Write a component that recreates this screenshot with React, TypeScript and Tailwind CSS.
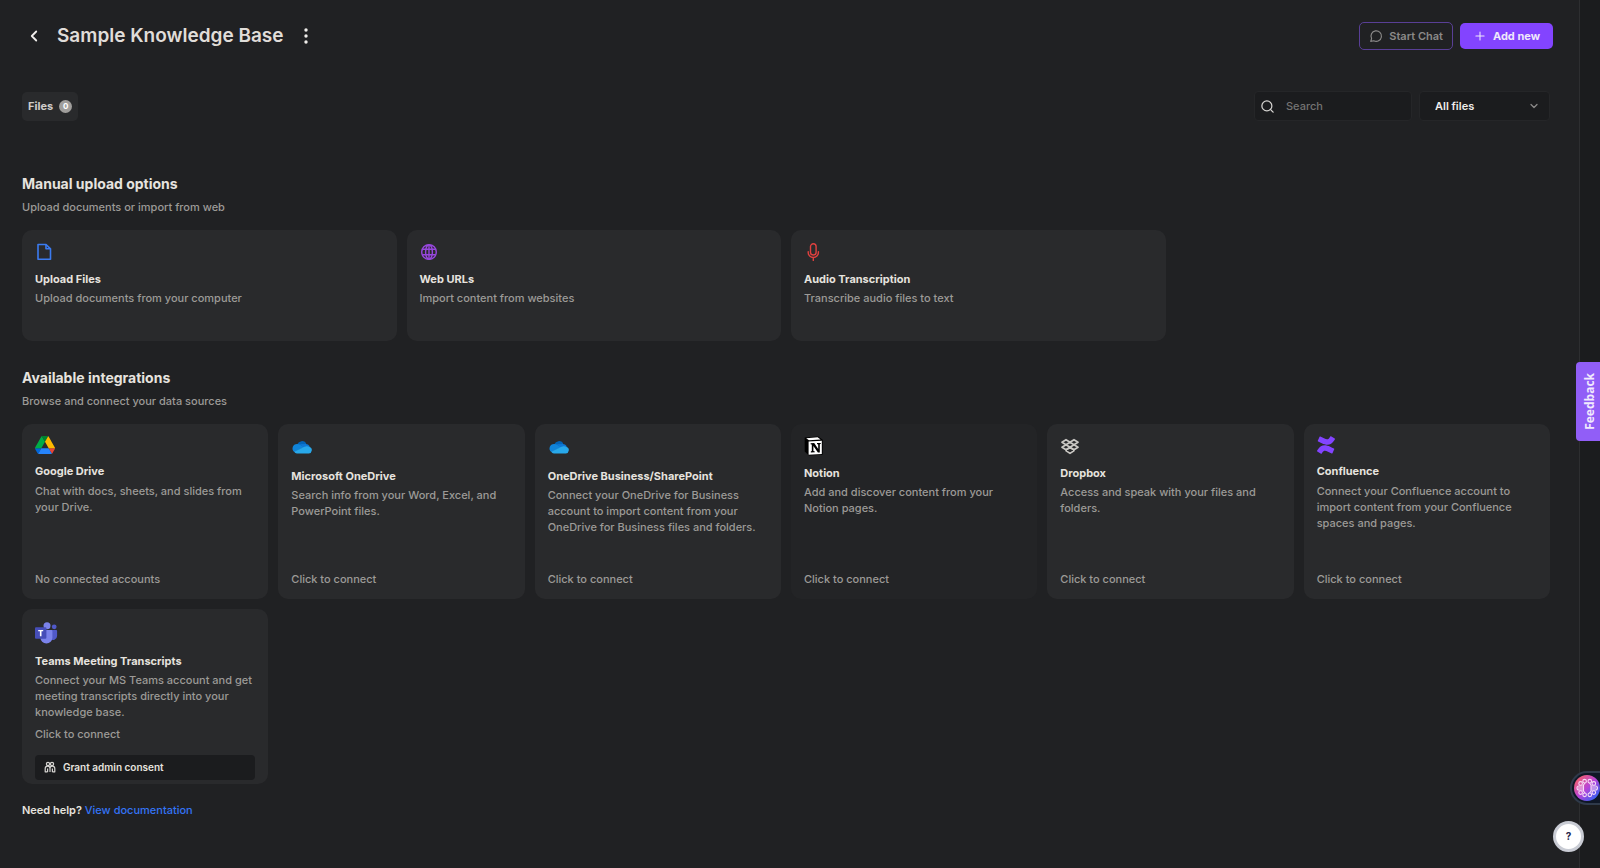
import type { ReactNode } from "react";
import { ChevronDown, ChevronLeft, Plus, Search } from "lucide-react";
import { SiConfluence } from "react-icons/si";

function ChatIcon() {
  return (
    <svg viewBox="0 0 24 24" className="size-[14px]" fill="none" stroke="currentColor" strokeWidth="2" strokeLinecap="round" strokeLinejoin="round">
      <path d="M3 21.200l1.400-4.800A9 9 0 1 1 8.200 20.200z" />
    </svg>
  );
}

function FileIcon() {
  return (
    <svg viewBox="-1 0 18 18" className="size-[18px]" fill="none" stroke="#3b7bf0" strokeWidth="1.6" strokeLinejoin="round">
      <path d="M2 1.500h8l4.500 4.300v10.500H2z" />
      <path d="M10 1.500V5.800h4.500" />
    </svg>
  );
}

function GlobeIcon() {
  return (
    <svg viewBox="0 0 18 18" className="size-[18px]" fill="none" stroke="#9747dd" strokeWidth="1.4">
      <circle cx="9" cy="9" r="7.3" />
      <ellipse cx="9" cy="9" rx="3.4" ry="7.3" />
      <path d="M9 1.7v14.6M2.4 6.2h13.2M2.4 11.8h13.2" />
    </svg>
  );
}

function MicIcon() {
  return (
    <svg viewBox="0 0 18 18" className="size-[18px]" fill="none" stroke="#e0413f" strokeWidth="1.4" strokeLinecap="round">
      <rect x="6.500" y="0.8" width="5.600" height="11.2" rx="2.8" />
      <path d="M4.200 8.6v.8a5.100 5.100 0 0 0 10.200 0v-.8M9.300 14.5v3" />
    </svg>
  );
}

function DriveIcon() {
  return (
    <svg viewBox="0 0 87.3 78" className="h-[18px] w-5">
      <path d="m6.6 66.85 3.85 6.65c.8 1.4 1.95 2.5 3.3 3.3l13.75-23.8h-27.5c0 1.55.4 3.1 1.2 4.5z" fill="#0066da" />
      <path d="m43.65 25-13.75-23.8c-1.35.8-2.5 1.9-3.3 3.3l-25.4 44a9.06 9.06 0 0 0-1.2 4.5h27.5z" fill="#00ac47" />
      <path d="m73.55 76.8c1.35-.8 2.5-1.9 3.3-3.3l1.6-2.75 7.65-13.25c.8-1.4 1.2-2.95 1.2-4.5h-27.5l5.85 11.5z" fill="#ea4335" />
      <path d="m43.65 25 13.75-23.8c-1.35-.8-2.9-1.2-4.5-1.2h-18.5c-1.6 0-3.15.45-4.5 1.2z" fill="#00832d" />
      <path d="m59.8 53h-32.3l-13.75 23.8c1.35.8 2.9 1.2 4.5 1.2h50.8c1.6 0 3.15-.45 4.5-1.2z" fill="#2684fc" />
      <path d="m73.4 26.5-12.7-22c-.8-1.4-1.95-2.5-3.3-3.3l-13.75 23.8 16.15 28h27.45c0-1.55-.4-3.1-1.2-4.5z" fill="#ffba00" />
    </svg>
  );
}

function OneDriveIcon() {
  return (
    <svg viewBox="0.4 1.2 26 26" className="size-6">
      <path d="M7.2 10.2A5.6 5.6 0 0 1 16.9 9l-2.4 5.2-7.3-1.6z" fill="#0364b8" />
      <path d="M16.3 10a4.9 4.9 0 0 1 4.6 3.3l-4 2.5-7-5.6z" fill="#0f78d4" />
      <path d="M6.900 9.800a4.900 4.900 0 0 1 2.900.7l4.600 2.800L4 18.600a4.900 4.900 0 0 1 2.900-8.800z" fill="#1084d9" />
      <path d="M3.8 18.2l10.5-5 2-.5c1-.5 2.5-.5 4.2.4a3.6 3.6 0 0 1-.8 7H6.8a4.8 4.8 0 0 1-3-1.9z" fill="#28a8ea" />
    </svg>
  );
}

function NotionIcon() {
  return (
    <svg viewBox="0 0 20 20" className="size-5">
      <path d="M.7 1.6 14.2.5l4.5 3.300v15L5 19.6.7 15.4z" fill="#000" />
      <path d="M2.2 2.2 13.6 1.3l3 2.1L5 4.2z" fill="#fff" />
      <path d="M4.6 5.4 17.8 4.7v13.2L4.6 18.7z" fill="#fff" />
      <path d="M6.600 7.300l3.600-.2 4 5.900V8.400l-1.200-.3v-1l3.800-.2v.9l-1 .5v8.100l-1.900.1-4.500-6.500v5.100l1.400.3v.9l-4 .2v-.9l1-.5V8.500l-1.200-.2z" fill="#000" />
    </svg>
  );
}

function DropboxIcon() {
  return (
    <svg viewBox="0 -2 20 20" className="size-5" fill="none" stroke="#c9c7c3" strokeWidth="1.7" strokeLinejoin="round">
      <path d="M6 1.700 10 4.200 6 6.700 2 4.200zM14 1.700l4 2.500-4 2.500-4-2.500zM6 6.700l4 2.500-4 2.500-4-2.500zM14 6.700l4 2.500-4 2.500-4-2.500z" />
      <path d="M6.200 11.900v1L10 15.400l3.800-2.500v-1L10 9.500z" />
    </svg>
  );
}

function TeamsIcon() {
  return (
    <svg viewBox="1 0 24 24" className="size-6">
      <circle cx="20.2" cy="5.8" r="2.4" fill="#5059c9" />
      <path d="M16 9h6.2a.9.9 0 0 1 .9.9v5.2a4 4 0 0 1-7 2.6z" fill="#5059c9" />
      <circle cx="13" cy="4.7" r="3.5" fill="#7b83eb" />
      <path d="M7.2 9h10.2a1 1 0 0 1 1 1v6.4a6 6 0 0 1-12 0V10z" fill="#7b83eb" />
      <rect x="1" y="6.3" width="11.4" height="11.4" rx="1" fill="#464eb8" />
      <path d="M4.2 8.9h5v1.4H7.5v5H5.9v-5H4.2z" fill="#fff" />
    </svg>
  );
}

function AdminsIcon() {
  return (
    <svg viewBox="0 0 12 12" className="size-3" fill="none" stroke="#d6d4d1" strokeWidth="1.2">
      <circle cx="4" cy="3" r="1.600" />
      <circle cx="8" cy="3" r="1.600" />
      <path d="M1.200 11V7.600C1.200 6 2.300 5.200 3.800 5.200S6 6 6 7.600V11M6 7.600C6 6 6.700 5.200 8.200 5.200s2.600.8 2.600 2.400V11M3.600 7.600V11M8.400 7.600V11M.8 10.800h2.800M8.400 10.800h2.800" />
    </svg>
  );
}

function AssistantIcon() {
  return (
    <svg viewBox="0 0 26 26" className="size-[26px] shrink-0">
      <defs>
        <linearGradient id="assistant" x1="0" y1="0" x2="1" y2="1">
          <stop offset="0.1" stopColor="#f4606c" />
          <stop offset="0.5" stopColor="#b844d8" />
          <stop offset="0.9" stopColor="#2f63f5" />
        </linearGradient>
      </defs>
      <circle cx="13" cy="13" r="13" fill="url(#assistant)" />
      <g fill="none" stroke="#f6dcf6" strokeWidth="1.1">
        <circle cx="10.600" cy="6.200" r="1.800" />
        <circle cx="15.800" cy="6.200" r="1.800" />
        <circle cx="6.600" cy="8.400" r="1.800" />
        <circle cx="19.800" cy="8.400" r="1.800" />
        <circle cx="6.600" cy="17.600" r="1.800" />
        <circle cx="19.800" cy="17.600" r="1.800" />
        <circle cx="10.600" cy="19.800" r="1.800" />
        <circle cx="15.800" cy="19.800" r="1.800" />
        <path d="M9.500 11H5a2 2 0 0 0 0 4h4.500M17 11h4.500a2 2 0 0 1 0 4H17M4 13h5.500M17 13h5.500M11 8l-1.500 2v6l1.500 2M15.500 8l1.500 2v6l-1.500 2" />
      </g>
    </svg>
  );
}

type Integration = {
  name: string;
  text: string;
  status: string;
  icon: ReactNode;
  iconBox: string;
  textGap: string;
  card: string;
  action?: string;
};

const plainCard = "bg-[#292a2c]";

const integrations: Integration[] = [
  { name: "Google Drive", text: "Chat with docs, sheets, and slides from your Drive.", status: "No connected accounts", icon: <DriveIcon />, iconBox: "h-[19px]", textGap: "mt-1", card: plainCard },
  { name: "Microsoft OneDrive", text: "Search info from your Word, Excel, and PowerPoint files.", status: "Click to connect", icon: <OneDriveIcon />, iconBox: "h-6", textGap: "mt-[3px]", card: plainCard },
  { name: "OneDrive Business/SharePoint", text: "Connect your OneDrive for Business account to import content from your OneDrive for Business files and folders.", status: "Click to connect", icon: <OneDriveIcon />, iconBox: "h-6", textGap: "mt-[3px]", card: plainCard },
  { name: "Notion", text: "Add and discover content from your Notion pages.", status: "Click to connect", icon: <NotionIcon />, iconBox: "h-[21px]", textGap: "mt-[3px]", card: "bg-[#232426]" },
  { name: "Dropbox", text: "Access and speak with your files and folders.", status: "Click to connect", icon: <DropboxIcon />, iconBox: "h-[21px]", textGap: "mt-[3px]", card: plainCard },
  { name: "Confluence", text: "Connect your Confluence account to import content from your Confluence spaces and pages.", status: "Click to connect", icon: <SiConfluence className="size-[18px] text-[#8344ff]" />, iconBox: "h-[19px]", textGap: "mt-1", card: plainCard },
  { name: "Teams Meeting Transcripts", text: "Connect your MS Teams account and get meeting transcripts directly into your knowledge base.", status: "Click to connect", icon: <TeamsIcon />, iconBox: "h-6", textGap: "mt-[3px]", card: plainCard, action: "Grant admin consent" },
];

const uploads = [
  { name: "Upload Files", text: "Upload documents from your computer", icon: <FileIcon /> },
  { name: "Web URLs", text: "Import content from websites", icon: <GlobeIcon /> },
  { name: "Audio Transcription", text: "Transcribe audio files to text", icon: <MicIcon /> },
];

function SectionHeading({ title, text }: { title: string; text: string }) {
  return (
    <div>
      <h2 className="text-[14px] leading-5 font-bold text-[#e6e3df]">{title}</h2>
      <p className="mt-[3px] text-[11px] leading-5 font-medium text-[#9c9a97]">{text}</p>
    </div>
  );
}

function IntegrationCard({ item }: { item: Integration }) {
  return (
    <li className={`flex h-[175px] flex-col overflow-hidden rounded-[10px] px-[13px] pt-3 ${item.card}`}>
      <div className={`flex items-start ${item.iconBox}`}>{item.icon}</div>
      <h3 className="mt-2 text-[11px] leading-4 font-bold text-[#e6e3df]">{item.name}</h3>
      <p className={`text-[11px] leading-4 font-medium text-[#9c9a97] ${item.textGap}`}>{item.text}</p>
      {item.action ? (
        <>
          <p className="mt-[6px] text-[11px] leading-4 font-medium text-[#9c9a97]">{item.status}</p>
          <button type="button" className="mt-[13px] flex h-[25px] shrink-0 items-center gap-[7px] rounded bg-[#1b1c1e] px-[9px] pb-[2px] text-[10px] leading-4 font-semibold text-[#e6e3df]">
            <AdminsIcon />
            {item.action}
          </button>
        </>
      ) : (
        <p className="mt-auto mb-3 text-[11px] leading-4 font-medium text-[#9c9a97]">{item.status}</p>
      )}
    </li>
  );
}

export default function App() {
  return (
    <div className="flex min-h-screen bg-[#1b1c1e] font-['Inter',sans-serif]">
      <main className="min-w-0 flex-1 border-r border-[#2d2e30] bg-[#202123] pr-[29px] pl-[22px]">
        <header className="flex items-center justify-between pt-[22px]">
          <div className="flex items-center">
            <button type="button" aria-label="Back" className="ml-[3px] text-[#f0eeeb]">
              <ChevronLeft className="size-[18px]" strokeWidth={2.4} />
            </button>
            <h1 className="ml-[14px] text-[19px] leading-[26px] font-semibold text-[#e0ddd9]">Sample Knowledge Base</h1>
            <button type="button" aria-label="More options" className="ml-4 p-1">
              <svg viewBox="0 0 4 16" className="h-4 w-1" fill="#f0eeeb">
                <circle cx="2" cy="2" r="1.7" />
                <circle cx="2" cy="8" r="1.7" />
                <circle cx="2" cy="14" r="1.7" />
              </svg>
            </button>
          </div>
          <div className="-mr-[3px] flex items-center gap-[7px]">
            <button type="button" className="flex h-7 items-center gap-[6px] rounded-[5px] border border-[#593f96] px-[9px] text-[11px] font-semibold text-[#8b8a89]">
              <ChatIcon />
              Start Chat
            </button>
            <button type="button" className="flex h-[26px] items-center gap-[6px] rounded-[5px] bg-[#8344ff] px-[13px] text-[11px] font-bold text-[#efe8fb]">
              <Plus className="size-[14px]" strokeWidth={1.8} />
              Add new
            </button>
          </div>
        </header>

        <div className="mt-[41px] flex items-center justify-between">
          <button type="button" className="flex h-[29px] items-center gap-[6px] rounded-[5px] bg-[#292a2c] px-[6px] text-[11px] font-bold text-[#cfccc9]">
            Files
            <span className="flex size-[13px] items-center justify-center rounded-full bg-[#a09e9c] text-[8px] leading-none font-bold text-white">0</span>
          </button>
          <div className="flex gap-[7px]">
            <label className="flex h-[30px] w-[158px] items-center gap-[11px] rounded-[4px] border border-[#252628] bg-[#1b1c1e] px-[5px]">
              <Search className="size-[15px] shrink-0 text-[#d6d4d1]" strokeWidth={2} />
              <input type="search" aria-label="Search files" placeholder="Search" className="h-7 w-full min-w-0 bg-transparent text-[11px] font-medium text-[#e6e3df] outline-none placeholder:text-[#747372]" />
            </label>
            <label className="flex h-[30px] w-[131px] items-center rounded-[4px] border border-[#252628] bg-[#1b1c1e] pr-[9px] pl-[15px]">
              <select aria-label="File type" className="h-7 w-full min-w-0 appearance-none bg-transparent text-[11px] font-semibold text-[#f0eeeb] outline-none">
                <option>All files</option>
              </select>
              <ChevronDown className="size-3 shrink-0 text-[#8b8a89]" strokeWidth={2.5} />
            </label>
          </div>
        </div>

        <section className="mt-[53px]">
          <SectionHeading title="Manual upload options" text="Upload documents or import from web" />
          <ul className="mt-[13px] grid grid-cols-4 gap-[10px]">
            {uploads.map((item) => (
              <li key={item.name} className="h-[111px] rounded-[10px] bg-[#292a2c] p-[13px]">
                <div className="flex h-5 items-start">{item.icon}</div>
                <h3 className="mt-2 text-[11px] leading-4 font-bold text-[#e6e3df]">{item.name}</h3>
                <p className="mt-[3px] text-[11px] leading-4 font-medium text-[#9c9a97]">{item.text}</p>
              </li>
            ))}
          </ul>
        </section>

        <section className="mt-[27px]">
          <SectionHeading title="Available integrations" text="Browse and connect your data sources" />
          <ul className="mt-[13px] grid grid-cols-6 gap-[10px]">
            {integrations.map((item) => (
              <IntegrationCard key={item.name} item={item} />
            ))}
          </ul>
        </section>

        <p className="mt-[18px] text-[11px] leading-4 font-semibold text-[#e6e3df]">
          Need help?{" "}
          <a href="#documentation" className="font-medium text-[#3474f5]">
            View documentation
          </a>
        </p>
      </main>
      <aside className="w-5 shrink-0" />

      <button type="button" className="fixed top-[362px] right-0 flex h-[79px] w-6 items-center justify-center rounded-l-[4px] bg-[#915ef7] pl-1 font-['Open_Sans',sans-serif] text-[12px] font-bold text-[#f1eafd]">
        <span className="rotate-180 [writing-mode:vertical-rl]">Feedback</span>
      </button>
      <button type="button" aria-label="Assistant" className="fixed right-0 bottom-[63px] flex h-[34px] w-[30px] items-center overflow-hidden rounded-l-full border-2 border-r-0 border-[#2f3a4a] bg-[#0f1726] pl-[2px]">
        <AssistantIcon />
      </button>
      <button type="button" aria-label="Help" className="fixed right-4 bottom-4 flex size-[31px] items-center justify-center rounded-full border-[3px] border-[#c9ccd4] bg-white text-[10px] font-bold text-[#23264a]">
        ?
      </button>
    </div>
  );
}
